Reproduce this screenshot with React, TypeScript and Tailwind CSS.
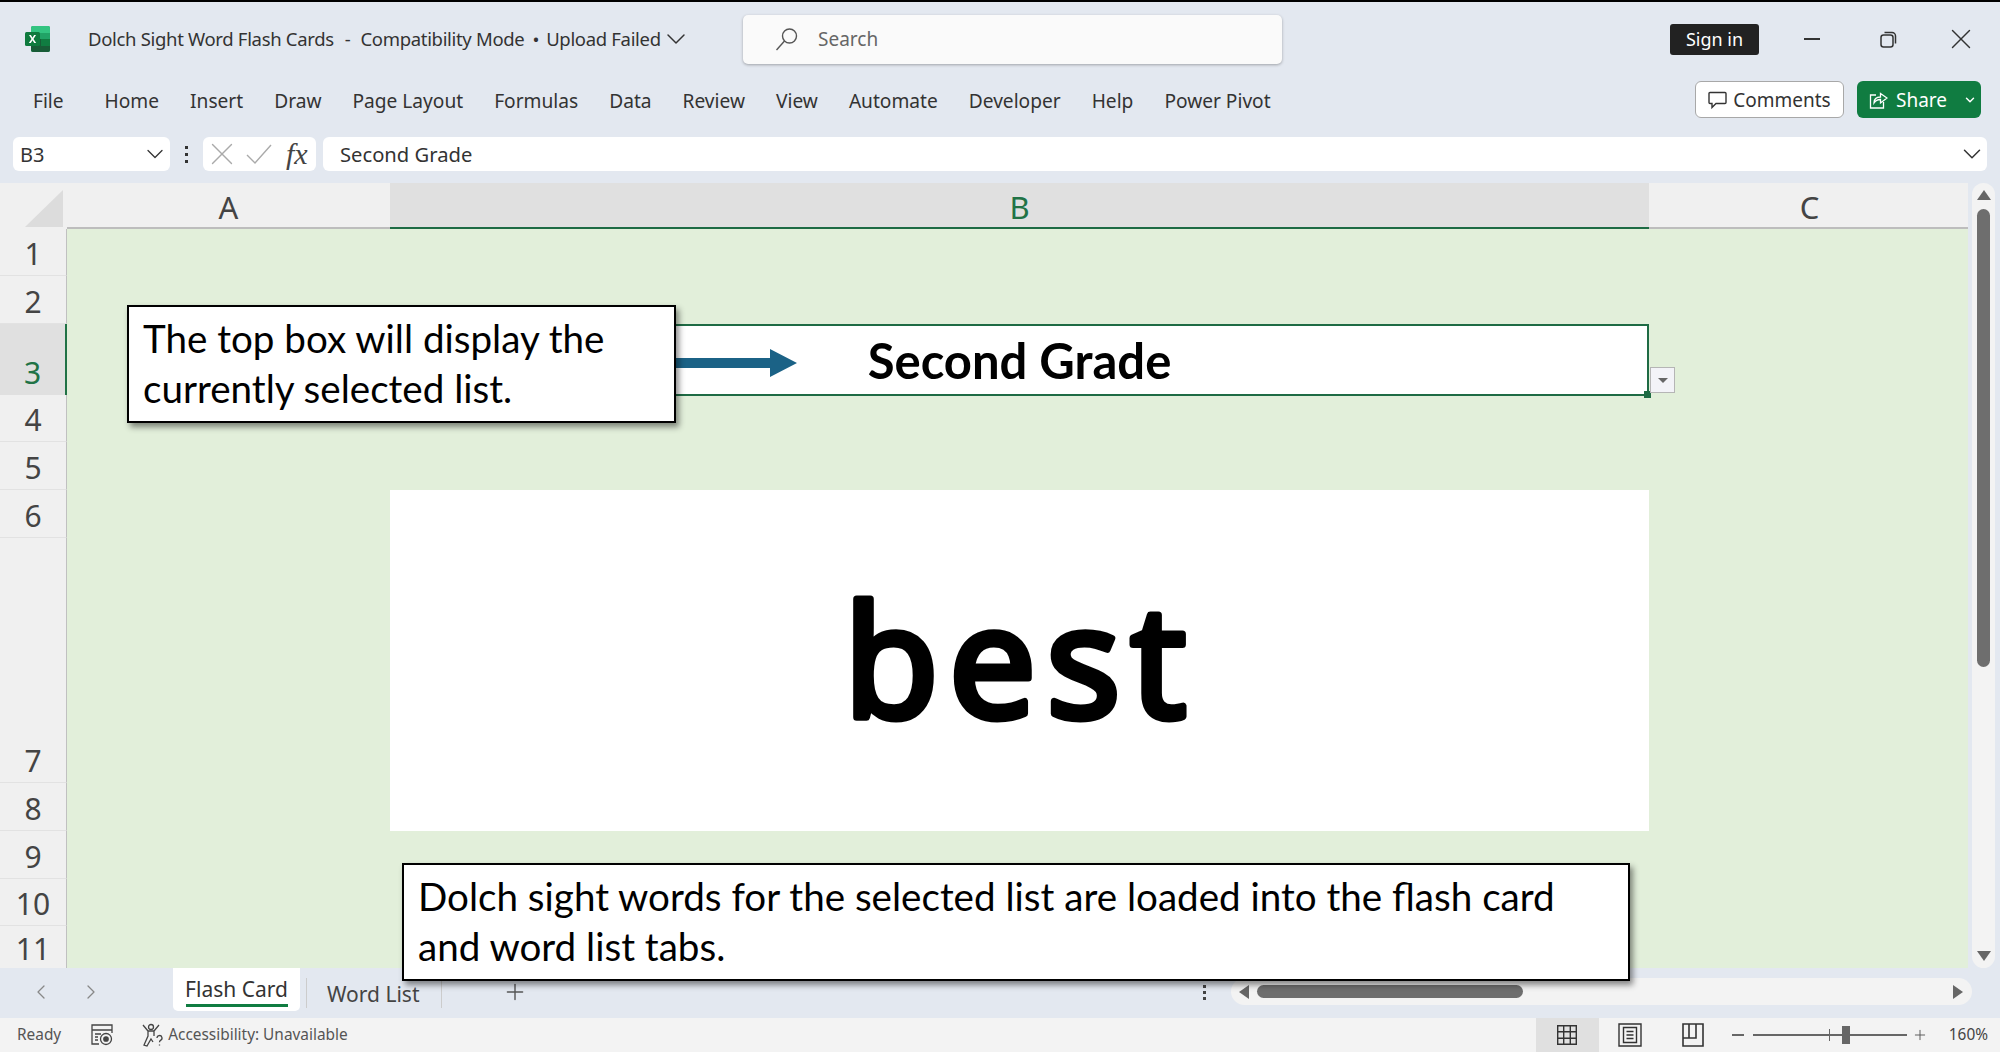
import { ChevronDown, ChevronLeft, ChevronRight, Plus, X } from 'lucide-react';

const ui = "font-['Noto_Sans',sans-serif]";
const callout = "font-['Lato',sans-serif]";

const menuItems = ['Home', 'Insert', 'Draw', 'Page Layout', 'Formulas', 'Data', 'Review', 'View', 'Automate', 'Developer', 'Help', 'Power Pivot'];

const rowClasses = [
  'row-start-2',
  'row-start-3',
  'row-start-4',
  'row-start-5',
  'row-start-6',
  'row-start-7',
  'row-start-8',
  'row-start-9',
  'row-start-10',
  'row-start-11',
  'row-start-12',
];

function ExcelLogo() {
  return (
    <svg width="26" height="26" viewBox="0 0 26 26" aria-hidden>
      <rect x="6" y="0" width="19" height="26" rx="2" fill="#21a366" />
      <path d="M8 0h15a2 2 0 0 1 2 2v5H6V2a2 2 0 0 1 2-2z" fill="#33c481" />
      <rect x="16" y="13" width="9" height="7" fill="#107c41" />
      <rect x="6" y="13" width="10" height="7" fill="#185c37" />
      <path d="M6 20h19v4a2 2 0 0 1-2 2H8a2 2 0 0 1-2-2z" fill="#185c37" />
      <rect x="0" y="6" width="15" height="14" rx="1.5" fill="#0f7a3e" />
      <path d="M4 9 6.500 13 3.800 17h2l1.700-2.800L9.200 17h2l-2.700-4L11 9H9.100L7.500 11.800 5.900 9z" fill="#fff" />
    </svg>
  );
}

function TitleBar() {
  return (
    <div className="flex h-[74px] items-center pl-[25px]">
      <ExcelLogo />
      <div className="ml-[37px] flex w-[655px] items-center text-[18.5px] tracking-[-0.32px] text-[#333]">
        <span>Dolch Sight Word Flash Cards</span>
        <span className="ml-[11px]">-</span>
        <span className="ml-[10px]">Compatibility Mode</span>
        <span className="ml-[8px]">•</span>
        <span className="ml-[7px]">Upload Failed</span>
        <ChevronDown className="-ml-[1px] h-[32px] w-[32px] text-[#333]" strokeWidth={1.1} />
      </div>
      <div className="flex h-[49px] w-[539px] items-center rounded-[5px] bg-[#fafafa] pl-[32px] shadow-[0_1px_3px_rgba(0,0,0,0.3)]">
        <svg width="24" height="24" viewBox="0 0 24 24" fill="none" stroke="#555" strokeWidth="1.4" aria-hidden>
          <circle cx="14.5" cy="9" r="7" />
          <path d="M9.5 14 1.5 23" />
        </svg>
        <span className="ml-[19px] text-[19px] text-[#666]">Search</span>
      </div>
      <div className="ml-auto flex h-[31px] w-[89px] items-center justify-center rounded-[3px] bg-[#222] text-[18px] text-white">Sign in</div>
      <div className="flex w-[241px] items-center pl-[45px]">
        <div className="h-[2px] w-[16px] bg-[#333]" />
        <svg className="ml-[60px]" width="17" height="17" viewBox="0 0 17 17" fill="none" stroke="#333" strokeWidth="1.5" aria-hidden>
          <rect x="1" y="4" width="12" height="12" rx="2.5" />
          <path d="M4.5 1.5h7.5a3.500 3.500 0 0 1 3.500 3.500v7.500" />
        </svg>
        <X className="ml-[47px] h-[34px] w-[34px] shrink-0 text-[#333]" strokeWidth={1} />
      </div>
    </div>
  );
}

function MenuBar() {
  return (
    <div className="flex h-[61px] items-start pt-[5px]">
      <div className="flex h-[40px] items-center text-[19.15px] text-[#333]">
        <span className="ml-[33px] mr-[41px]">File</span>
        <div className="flex gap-[31px]">
          {menuItems.map((item) => (
            <span key={item}>{item}</span>
          ))}
        </div>
      </div>
      <div className="ml-auto flex h-[37px] w-[149px] items-center justify-center gap-[6px] rounded-[6px] border border-[#a8a8a8] bg-white pt-[2px] text-[19px] text-[#333]">
        <svg className="-mt-[2px]" width="19" height="18" viewBox="0 0 19 18" fill="none" stroke="#333" strokeWidth="1.4" aria-hidden>
          <path d="M2 1.500h15a1 1 0 0 1 1 1v9a1 1 0 0 1-1 1H8l-4 4v-4H2a1 1 0 0 1-1-1v-9a1 1 0 0 1 1-1z" />
        </svg>
        Comments
      </div>
      <div className="ml-[13px] mr-[19px] flex h-[37px] w-[124px] items-center rounded-[6px] bg-[#107c41] pl-[12px] text-[19px] text-white">
        <svg width="19" height="19" viewBox="0 0 19 19" fill="none" stroke="#fff" strokeWidth="1.3" aria-hidden>
          <path d="M7 5H1.500v13h13v-6" />
          <path d="M5 13c0-4 2.500-6 6.500-6V3.500L18 8l-6.500 5V9.500C8.500 9.500 6.500 10.500 5 13z" />
        </svg>
        <span className="ml-[8px] pt-[2px]">Share</span>
        <ChevronDown className="ml-[16px] h-[14px] w-[14px]" strokeWidth={2.5} />
      </div>
    </div>
  );
}

function FormulaBar() {
  return (
    <div className="flex h-[34px] items-stretch pl-[13px] pr-[13px]">
      <div className="flex w-[157px] items-center justify-between rounded-[6px] bg-white pl-[7px] pr-[1px] text-[20px] text-[#333]">
        <span className="pt-[1px]">B3</span>
        <ChevronDown className="h-[28px] w-[28px] shrink-0" strokeWidth={1.1} />
      </div>
      <div className="flex w-[33px] flex-col items-center justify-center gap-[4px]">
        <div className="h-[3px] w-[3px] bg-[#333]" />
        <div className="h-[3px] w-[3px] bg-[#333]" />
        <div className="h-[3px] w-[3px] bg-[#333]" />
      </div>
      <div className="flex w-[113px] items-center rounded-[6px] bg-white">
        <X className="h-[38px] w-[38px] shrink-0 text-[#aaa]" strokeWidth={0.85} />
        <svg className="ml-[5px] shrink-0" width="26" height="22" viewBox="0 0 26 22" fill="none" stroke="#aaa" strokeWidth="1.4" aria-hidden>
          <path d="M1 12l8 8L25 2" />
        </svg>
        <span className="ml-[14px] font-['Liberation_Serif',serif] text-[30px] leading-none text-[#444] italic">fx</span>
      </div>
      <div className="ml-[7px] flex flex-1 items-center justify-between rounded-[6px] bg-white pl-[17px] text-[20.2px] text-[#333]">
        <span className="pt-[1px]">Second Grade</span>
        <ChevronDown className="h-[30px] w-[30px] shrink-0" strokeWidth={1.2} />
      </div>
    </div>
  );
}

function Sheet() {
  return (
    <div className="relative mt-[12px] flex h-[785px]">
      <div className="grid w-[1968px] grid-cols-[67px_323px_1259px_319px] grid-rows-[46px_47px_48px_71px_47px_48px_48px_245px_48px_48px_47px_42px]">
        <div className="relative col-start-1 row-start-1 bg-[#f0f0f0]">
          <div className="absolute bottom-[2px] right-[4px] h-0 w-0 border-b-[37px] border-l-[38px] border-b-[#dcdcdc] border-l-transparent" />
        </div>
        <div className="col-start-2 row-start-1 flex items-center justify-center border-b-2 border-[#bdbdbd] bg-[#f0f0f0] pt-[4px] text-[31px] text-[#444]">A</div>
        <div className="col-start-3 row-start-1 flex items-center justify-center border-b-2 border-[#1e6b44] bg-[#e0e0e0] pt-[4px] text-[31px] text-[#217346]">B</div>
        <div className="col-start-4 row-start-1 flex items-center justify-center border-b-2 border-[#bdbdbd] bg-[#f0f0f0] pl-[2px] pt-[4px] text-[31px] text-[#444]">C</div>

        {rowClasses.map((rowClass, i) => {
          const selected = i === 2;
          const last = i === 10;
          return (
            <div
              key={rowClass}
              className={
                selected
                  ? `col-start-1 ${rowClass} flex items-end justify-center border-r-2 border-[#217346] bg-[#e0e0e0] pb-[1px] text-[30px] leading-[42px] text-[#217346]`
                  : last
                    ? `col-start-1 ${rowClass} flex items-start justify-center border-r border-[#c0c0c0] bg-[#f0f0f0] pt-[4px] text-[30px] leading-[38px] text-[#444]`
                    : `col-start-1 ${rowClass} flex items-end justify-center border-b border-r border-[#e2e2e2] border-r-[#c0c0c0] bg-[#f0f0f0] text-[30px] leading-[42px] text-[#444]`
              }
            >
              {i + 1}
            </div>
          );
        })}

        <div className="col-span-3 col-start-2 row-span-11 row-start-2 bg-[#e2efda]" />
        <div className="col-start-3 row-start-4 -mb-[1px] flex items-center justify-center border-2 border-[#1e6b44] bg-white pt-[1px] font-['Lato',sans-serif] text-[49px] font-bold text-black">
          Second Grade
        </div>
        <div className="relative z-10 col-start-3 row-start-4">
          <div className="absolute -bottom-[3px] -right-[2px] h-[7px] w-[7px] bg-[#1e6b44]" />
          <div className="absolute -right-[26px] bottom-[2px] flex h-[26px] w-[25px] items-center justify-center border border-[#b5b5b5] bg-[#f3f3f8]">
            <div className="h-0 w-0 border-x-[5px] border-t-[5px] border-x-transparent border-t-[#666]" />
          </div>
        </div>
        <div className="col-start-3 row-span-3 row-start-7 flex items-center justify-center bg-white pb-[8px]">
          <svg width="460" height="260" viewBox="0 0 460 260">
            <text
              x="230"
              y="190"
              textAnchor="middle"
              fontFamily="'Noto Sans',sans-serif"
              fontSize="155"
              letterSpacing="10"
              fill="#000"
              stroke="#000"
              strokeWidth="7"
              strokeLinejoin="round"
              strokeLinecap="round"
            >
              best
            </text>
          </svg>
        </div>
      </div>

      <div className="ml-[4px] flex w-[23px] flex-col items-center rounded-full bg-[#f3f3f3] py-[7px]">
        <div className="h-0 w-0 border-x-[7px] border-b-[10px] border-x-transparent border-b-[#666]" />
        <div className="mt-[9px] h-[458px] w-[13px] rounded-full bg-[#6e6e6e]" />
        <div className="mt-auto h-0 w-0 border-x-[7px] border-t-[10px] border-x-transparent border-t-[#666]" />
      </div>

      <svg className="absolute left-[675px] top-[166px]" width="123" height="28" viewBox="0 0 123 28" aria-hidden>
        <path d="M0 9h95V0l27 14-27 14v-9H0z" fill="#1b6286" />
      </svg>
      <div className={`${callout} absolute left-[127px] top-[122px] h-[118px] w-[549px] border-2 border-black bg-white pl-[14px] pt-[6px] text-[38.6px] leading-[50px] text-black shadow-[3px_4px_6px_rgba(0,0,0,0.45)]`}>
        The top box will display the
        <br />
        currently selected list.
      </div>
      <div className={`${callout} absolute left-[402px] top-[680px] z-20 h-[118px] w-[1228px] border-2 border-black bg-white pl-[14px] pt-[6px] text-[38.6px] leading-[50px] text-black shadow-[3px_4px_6px_rgba(0,0,0,0.45)]`}>
        Dolch sight words for the selected list are loaded into the flash card
        <br />
        and word list tabs.
      </div>
    </div>
  );
}

function SheetTabs() {
  return (
    <div className="flex h-[50px] items-start">
      <ChevronLeft className="ml-[29px] mt-[12px] h-[24px] w-[24px] text-[#888]" strokeWidth={1.3} />
      <ChevronRight className="ml-[26px] mt-[12px] h-[24px] w-[24px] text-[#888]" strokeWidth={1.3} />
      <div className="ml-[70px] flex h-[43px] w-[127px] flex-col items-center rounded-b-[5px] bg-white pt-[5px] text-[21px] text-[#333]">
        <span className="leading-[32px]">Flash Card</span>
        <div className="-mt-[1px] h-[3px] w-[102px] bg-[#107c41]" />
      </div>
      <div className="ml-[6px] mt-[10px] h-[30px] w-px bg-[#ccc]" />
      <span className="ml-[20px] mt-[10px] text-[21px] leading-[32px] text-[#444]">Word List</span>
      <div className="ml-[21px] mt-[10px] h-[30px] w-px bg-[#ccc]" />
      <Plus className="ml-[60px] mt-[11px] h-[26px] w-[26px] text-[#555]" strokeWidth={1.3} />
      <div className="ml-[675px] mt-[17px] flex flex-col gap-[3px]">
        <div className="h-[3px] w-[3px] bg-[#444]" />
        <div className="h-[3px] w-[3px] bg-[#444]" />
        <div className="h-[3px] w-[3px] bg-[#444]" />
      </div>
      <div className="ml-[25px] mt-[10px] flex h-[27px] w-[741px] items-center rounded-full bg-[#f3f3f3] pl-[8px] pr-[9px]">
        <div className="h-0 w-0 border-y-[7px] border-r-[10px] border-y-transparent border-r-[#666]" />
        <div className="ml-[8px] h-[13px] w-[266px] rounded-full bg-[#6e6e6e]" />
        <div className="ml-auto h-0 w-0 border-y-[7px] border-l-[10px] border-y-transparent border-l-[#666]" />
      </div>
    </div>
  );
}

function StatusBar() {
  return (
    <div className="flex h-[34px] items-center bg-[#f3f3f3] text-[15.4px] text-[#555]">
      <span className="ml-[17px]">Ready</span>
      <svg className="ml-[30px]" width="22" height="22" viewBox="0 0 22 22" fill="none" stroke="#444" strokeWidth="1.3" aria-hidden>
        <path d="M1 1h20v5H1zM1 6v14h7M21 6v3M4 10h6M4 13h3M4 16h3" />
        <circle cx="15" cy="15" r="5.500" />
        <circle cx="15" cy="15" r="2.200" fill="#444" />
      </svg>
      <svg className="ml-[27px]" width="25" height="24" viewBox="0 0 25 24" fill="none" stroke="#444" strokeWidth="1.3" aria-hidden>
        <circle cx="11" cy="4" r="2.500" />
        <path d="M3 2l5 6h6l5-6M8 8v5l-4 9 3 1 4-7 2 3M14 8v5" />
        <path d="M17 15a2.500 2.500 0 1 1 3.500 2.300c-1 .5-1 1-1 2M19.500 21.500v1" />
      </svg>
      <span className="ml-[3px]">Accessibility: Unavailable</span>

      <div className="ml-auto flex h-full items-center">
        <div className="flex h-full w-[63px] items-center justify-center bg-[#e0e0e0]">
          <svg width="20" height="20" viewBox="0 0 20 20" fill="none" stroke="#333" strokeWidth="1.4" aria-hidden>
            <path d="M.7.7h18.600v18.600H.7zM6.700.7v18.600M13.300.7v18.600M.7 6.700h18.600M.7 13.300h18.600" />
          </svg>
        </div>
        <svg className="ml-[19px]" width="24" height="24" viewBox="0 0 24 24" fill="none" stroke="#333" strokeWidth="1.4" aria-hidden>
          <path d="M1 1h22v22H1zM5.500 4.500h13v15h-13zM8.500 8.500h7M8.500 12h7M8.500 15.500h7" />
        </svg>
        <svg className="ml-[40px]" width="22" height="24" viewBox="0 0 22 24" fill="none" stroke="#333" strokeWidth="1.6" aria-hidden>
          <path d="M1 1h20v22H1zM1 15h6V1M7 15h7V1" />
        </svg>
        <div className="ml-[28px] h-[2px] w-[12px] bg-[#666]" />
        <div className="relative ml-[9px] h-[2px] w-[154px] bg-[#666]">
          <div className="absolute left-[76px] top-[-5px] h-[12px] w-px bg-[#666]" />
          <div className="absolute left-[89px] top-[-8px] h-[18px] w-[8px] bg-[#666]" />
        </div>
        <Plus className="ml-[5px] h-[16px] w-[16px] text-[#555]" strokeWidth={1.4} />
        <span className="ml-[21px] mr-[12px] text-[#444]">160%</span>
      </div>
    </div>
  );
}

export default function App() {
  return (
    <div className={`${ui} flex h-[1052px] w-[2000px] flex-col overflow-hidden border-t-2 border-black bg-[#e3e8f0]`}>
      <TitleBar />
      <MenuBar />
      <FormulaBar />
      <Sheet />
      <SheetTabs />
      <StatusBar />
    </div>
  );
}
